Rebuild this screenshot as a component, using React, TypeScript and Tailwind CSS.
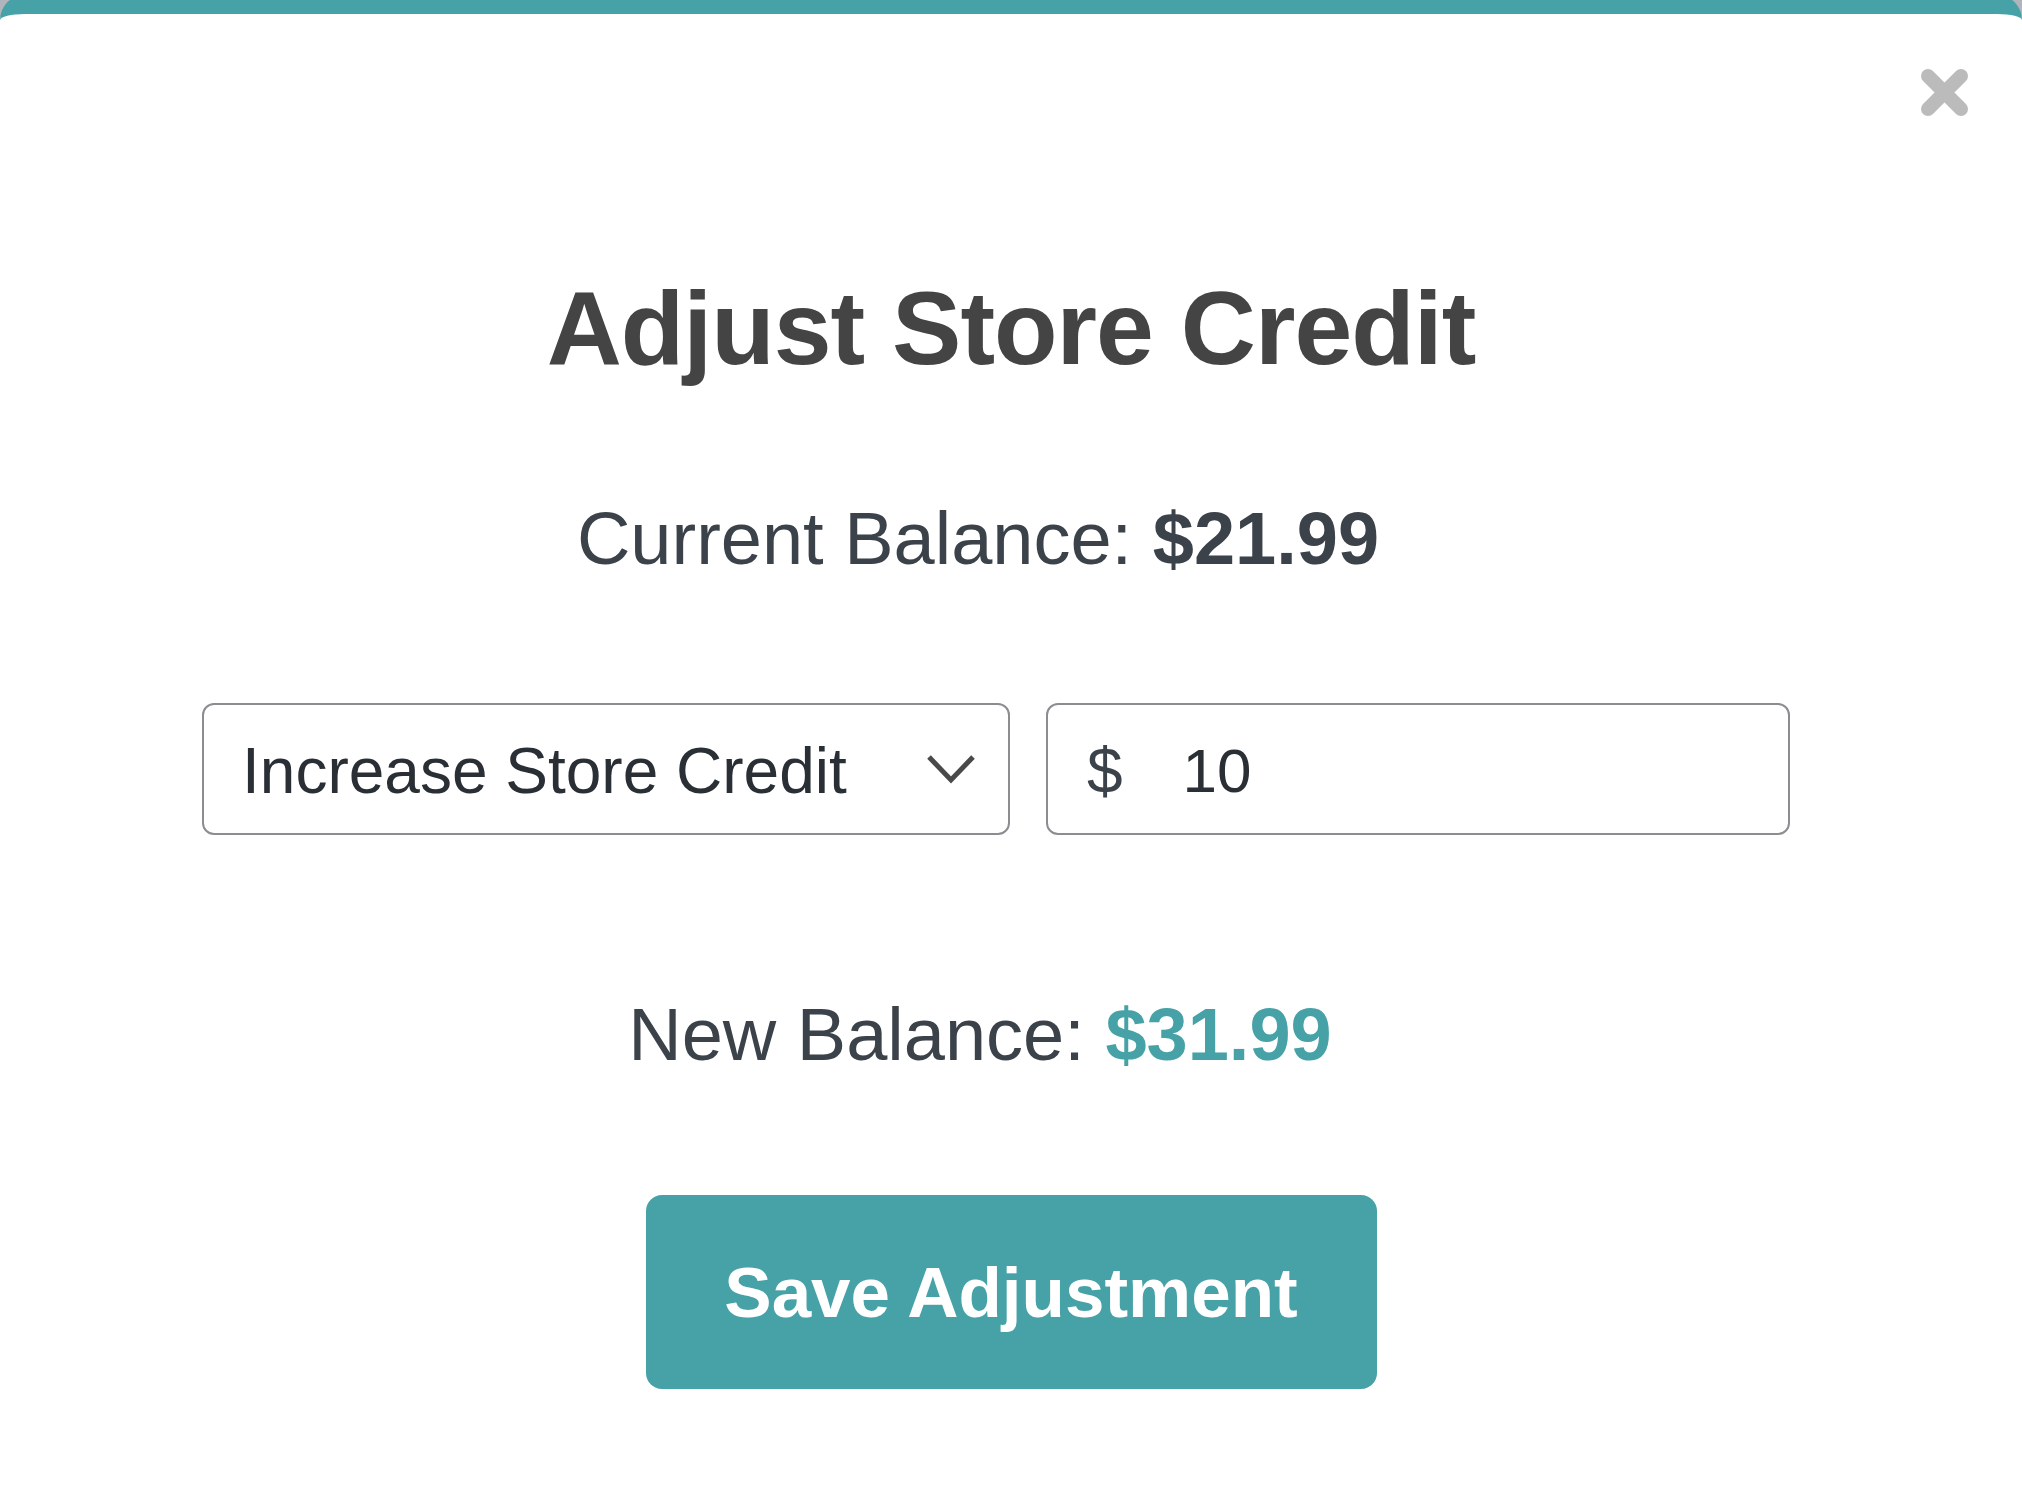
const font = { fontFamily: '"Liberation Sans", Arial, Helvetica, sans-serif' };

function CloseIcon() {
  return (
    <svg width="49" height="49" viewBox="0 0 49 49" fill="none">
      <path d="M8 8 L41 41 M41 8 L8 41" stroke="#bbbbbb" strokeWidth="14" strokeLinecap="round" />
    </svg>
  );
}

function Chevron() {
  return (
    <svg width="50" height="32" viewBox="0 0 50 32" fill="none">
      <path d="M3 4 L25 27 L47 4" stroke="#4a4a4a" strokeWidth="5" />
    </svg>
  );
}

export default function App() {
  return (
    <div className="h-[1503px] w-full overflow-hidden bg-[#b1b4ba]" style={font}>
      {/* modal */}
      <div className="relative -mt-[5px] h-[1520px] rounded-t-[25px] border-t-[19px] border-[#46a2a7] bg-white">
        <button className="absolute right-[53px] top-[54px]">
          <CloseIcon />
        </button>

        <div className="flex flex-col items-center pt-[262px]">
          <h1 className="text-[104px] font-bold leading-[104px] tracking-[-1px] text-[#444444]">
            Adjust Store Credit
          </h1>

          <p className="mt-[122px] pr-[66px] text-[74px] leading-[74px] text-[#3c424a]">
            Current Balance: <span className="font-bold">$21.99</span>
          </p>

          <div className="mt-[127px] flex w-full gap-[36px] pl-[202px] pr-[232px]">
            <div className="flex h-[132px] w-[808px] items-center justify-between rounded-[12px] border-[2.5px] border-[#8c8d91] pl-[38px] pr-[32px]">
              <span className="pt-[4px] text-[64px] leading-[64px] text-[#2a2f35]">Increase Store Credit</span>
              <Chevron />
            </div>
            <div className="flex h-[132px] flex-1 items-center rounded-[12px] border-[2.5px] border-[#8c8d91] pl-[39px]">
              <span className="pt-[4px] text-[64px] leading-[64px] text-[#3c424a]">$</span>
              <span className="ml-[60px] pt-[4px] text-[62px] leading-[64px] text-[#2a2f35]">10</span>
            </div>
          </div>

          <p className="mt-[163px] pr-[62px] text-[74px] leading-[74px] text-[#3c424a]">
            New Balance: <span className="font-bold text-[#46a2a7]">$31.99</span>
          </p>

          <button className="mt-[123px] flex h-[194px] w-[731px] items-center justify-center rounded-[16px] bg-[#46a2a7] text-[71px] font-bold leading-[71px] text-white">
            Save Adjustment
          </button>
        </div>
      </div>
    </div>
  );
}
